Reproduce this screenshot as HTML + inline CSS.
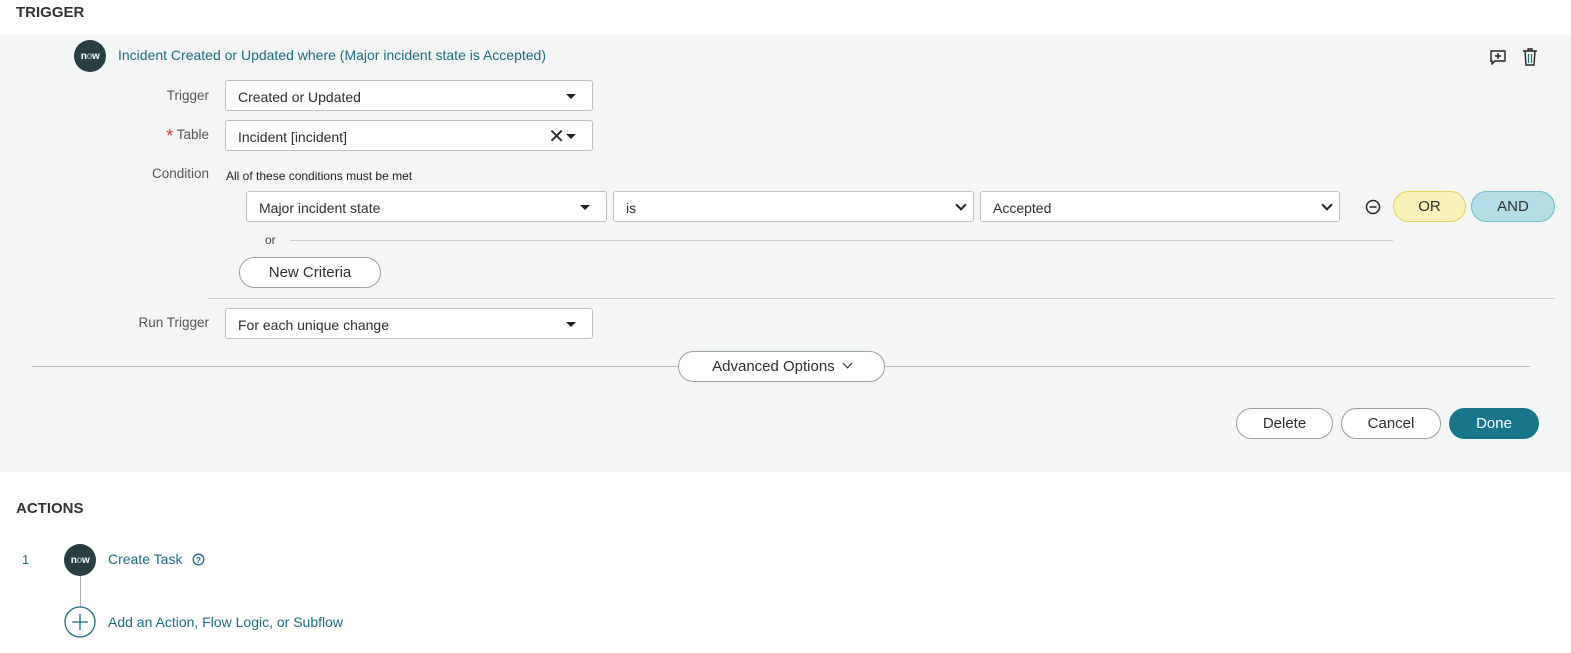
<!DOCTYPE html>
<html><head><style>
*{box-sizing:border-box;margin:0;padding:0}
body{width:1571px;height:653px;background:#fff;font-family:"Liberation Sans",sans-serif;color:#2e2e2e;position:relative;overflow:hidden}
.a{position:absolute}
.h{font-size:15px;color:#333;font-weight:600}
.panel{left:0;top:35px;width:1571px;height:437px;background:#f4f6f5}
.lbl{font-size:13.5px;color:#555;text-align:right;width:120px}
.sel{background:#fff;border:1px solid #bdc0c4;border-radius:3px;height:31px;font-size:14px;color:#2e2e2e;padding:8px 12px 6px}
.tri{position:absolute;right:16px;top:13px;width:0;height:0;border-left:5px solid transparent;border-right:5px solid transparent;border-top:5px solid #222}
.chev{position:absolute;right:8px;top:9px;width:8px;height:8px;border-right:2px solid #222;border-bottom:2px solid #222;transform:rotate(45deg)}
.btn{border:1px solid #9a9fa3;border-radius:16px;background:#fff;font-size:15px;text-align:center;color:#2e2e2e}
.now{border-radius:50%;background:#293e40;color:#fff;font-size:10px;font-weight:bold;text-align:center;letter-spacing:-0.5px}
.teal{color:#1d6c7e}
</style></head><body>
<div class="a h" style="left:16px;top:4px">TRIGGER</div>
<div class="a panel"></div>
<div class="a now" style="left:74px;top:40px;width:32px;height:32px;line-height:33px">n<span style="color:#81b5a1">o</span>w</div>
<div class="a teal" style="left:118px;top:47px;font-size:14px">Incident Created or Updated where (Major incident state is Accepted)</div>
<svg class="a" style="left:1489px;top:49px" width="18" height="16" viewBox="0 0 18 16"><path d="M2 2h14v10H6l-3 3v-3H2z" fill="none" stroke="#222" stroke-width="1.4"/><path d="M9 4v6M6 7h6" stroke="#222" stroke-width="1.4"/></svg>
<svg class="a" style="left:1522px;top:48px" width="16" height="18" viewBox="0 0 16 18"><path d="M1 3h14M6 3V1h4v2M3 3l1 14h8l1-14" fill="none" stroke="#222" stroke-width="1.4"/><path d="M6.5 6v9M9.5 6v9" stroke="#1d6c7e" stroke-width="1.2"/></svg>

<div class="a lbl" style="left:89px;top:88px">Trigger</div>
<div class="a sel" style="left:225px;top:80px;width:368px">Created or Updated<span class="tri"></span></div>
<div class="a lbl" style="left:89px;top:126px"><span style="color:#c83c36;font-size:18px;vertical-align:-3px">*</span> Table</div>
<div class="a sel" style="left:225px;top:120px;width:368px">Incident [incident]<span class="a" style="right:27px;top:3px;font-size:20px">✕</span><span class="tri"></span></div>
<div class="a lbl" style="left:89px;top:166px">Condition</div>
<div class="a" style="left:226px;top:169px;font-size:12px;color:#222">All of these conditions must be met</div>
<div class="a sel" style="left:246px;top:191px;width:361px">Major incident state<span class="tri"></span></div>
<div class="a sel" style="left:613px;top:191px;width:361px">is<span class="chev"></span></div>
<div class="a sel" style="left:980px;top:191px;width:360px">Accepted<span class="chev"></span></div>
<svg class="a" style="left:1365px;top:199px" width="16" height="16"><circle cx="8" cy="8" r="6.5" fill="none" stroke="#222" stroke-width="1.5"/><path d="M4.5 8h7" stroke="#222" stroke-width="1.5"/></svg>
<div class="a" style="left:1393px;top:191px;width:73px;height:31px;border-radius:16px;background:#fbf2bb;border:1px solid #e7d15a;text-align:center;line-height:30px;font-size:15px">OR</div>
<div class="a" style="left:1471px;top:191px;width:84px;height:31px;border-radius:16px;background:#b5dde6;border:1px solid #73bccd;text-align:center;line-height:30px;font-size:15px">AND</div>
<div class="a" style="left:265px;top:233px;font-size:12px;color:#444">or</div>
<div class="a" style="left:290px;top:240px;width:1103px;height:1px;background:#c8cbcd"></div>
<div class="a btn" style="left:239px;top:257px;width:142px;height:31px;line-height:30px">New Criteria</div>
<div class="a" style="left:208px;top:298px;width:1347px;height:1px;background:#c8cbcd"></div>
<div class="a lbl" style="left:89px;top:315px">Run Trigger</div>
<div class="a sel" style="left:225px;top:308px;width:368px">For each unique change<span class="tri"></span></div>
<div class="a" style="left:32px;top:366px;width:1498px;height:1px;background:#b8bbbd"></div>
<div class="a btn" style="left:678px;top:351px;width:207px;height:31px;line-height:30px">Advanced Options <span style="display:inline-block;width:7px;height:7px;border-right:1.5px solid #222;border-bottom:1.5px solid #222;transform:rotate(45deg);margin:0 0 4px 5px"></span></div>
<div class="a btn" style="left:1236px;top:408px;width:97px;height:31px;line-height:30px">Delete</div>
<div class="a btn" style="left:1341px;top:408px;width:100px;height:31px;line-height:30px">Cancel</div>
<div class="a btn" style="left:1449px;top:408px;width:90px;height:31px;line-height:32px;background:#18758a;border:none;color:#fff">Done</div>

<div class="a h" style="left:16px;top:500px">ACTIONS</div>
<div class="a" style="left:22px;top:552px;font-size:13px;color:#1d6c7e">1</div>
<div class="a now" style="left:64px;top:544px;width:32px;height:32px;line-height:33px">n<span style="color:#81b5a1">o</span>w</div>
<div class="a teal" style="left:108px;top:551px;font-size:14px">Create Task</div>
<svg class="a" style="left:192px;top:553px" width="13" height="13"><circle cx="6.5" cy="6.5" r="5.3" fill="none" stroke="#1d6c7e" stroke-width="1.3"/><text x="6.5" y="9.8" font-size="8.5" text-anchor="middle" fill="#1d6c7e" font-family="Liberation Sans" font-weight="bold">?</text></svg>
<div class="a" style="left:80px;top:576px;width:1px;height:31px;background:#aaa"></div>
<svg class="a" style="left:64px;top:606px" width="32" height="32"><circle cx="16" cy="16" r="15" fill="#fff" stroke="#1d6c7e" stroke-width="1.3"/><path d="M16 8v16M8 16h16" stroke="#1d6c7e" stroke-width="1.3"/></svg>
<div class="a teal" style="left:108px;top:614px;font-size:14px">Add an Action, Flow Logic, or Subflow</div>
</body></html>
